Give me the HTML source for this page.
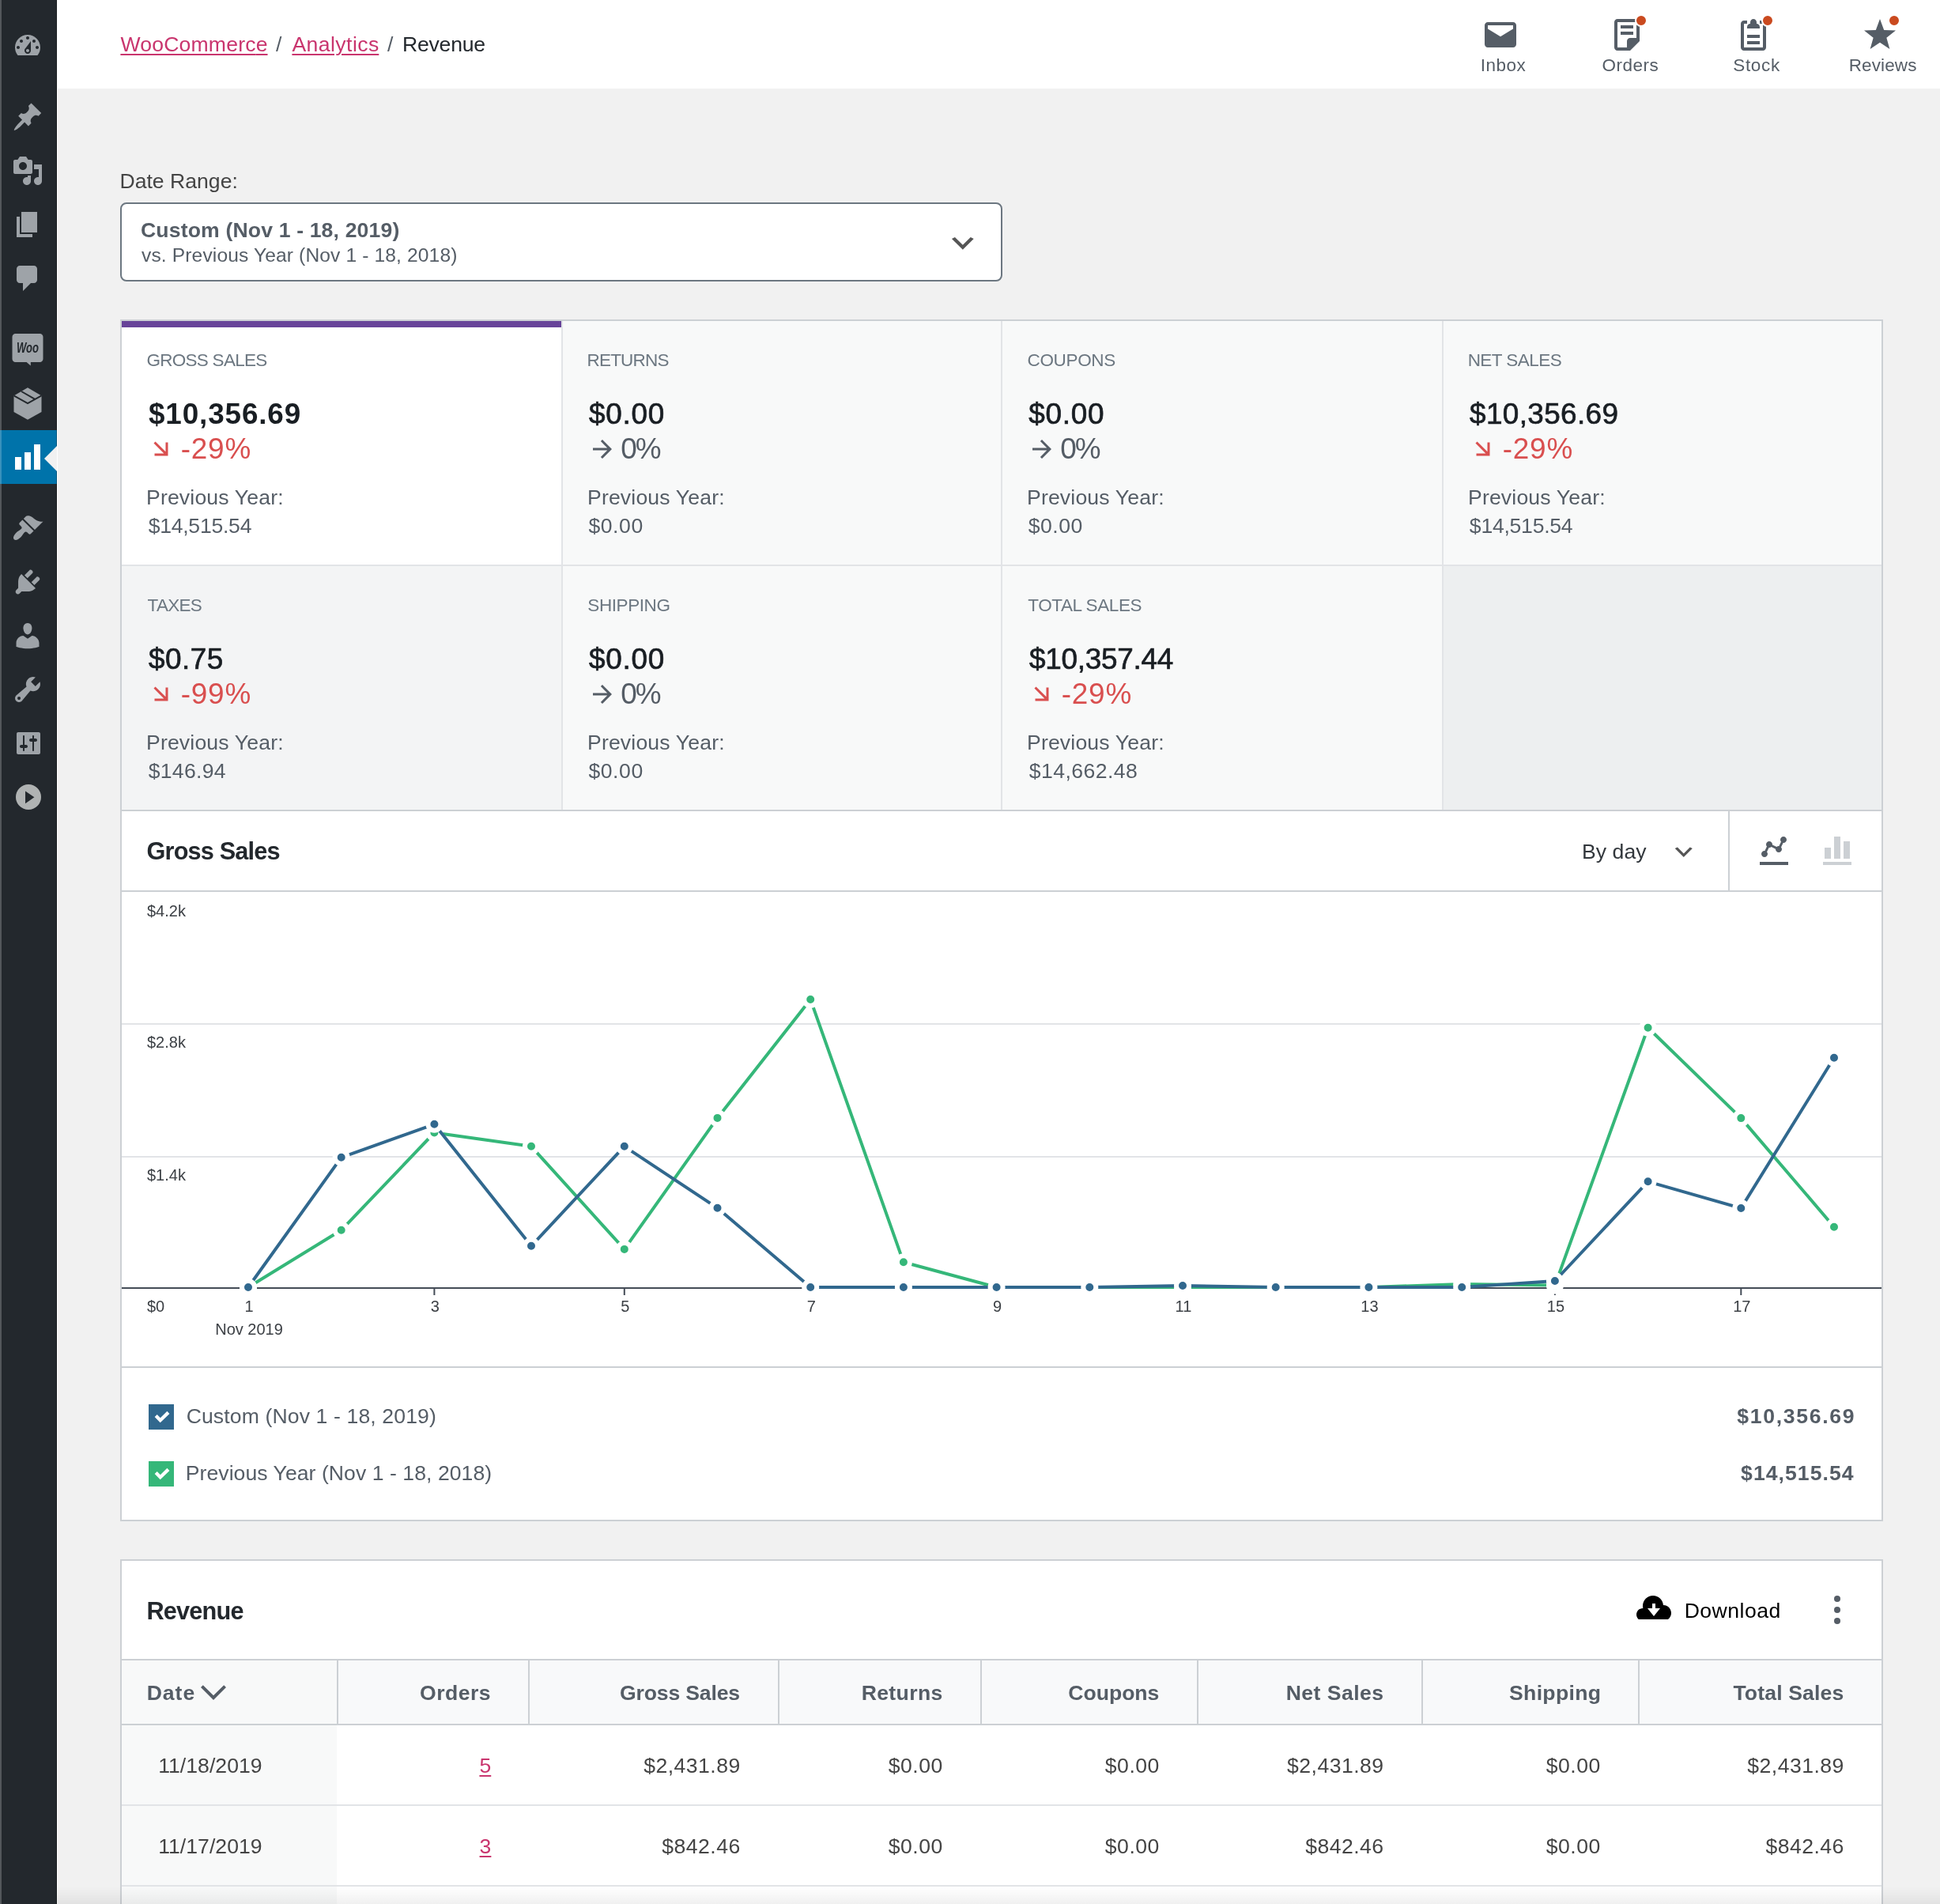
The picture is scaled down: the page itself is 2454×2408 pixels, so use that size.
<!DOCTYPE html>
<html lang="en"><head><meta charset="utf-8"><title>Revenue &lsaquo; Analytics &lsaquo; WooCommerce</title><style>
html,body{margin:0;padding:0}
body{width:2454px;height:2408px;background:#f1f1f1;font-family:"Liberation Sans",Arial,sans-serif;position:relative;-webkit-font-smoothing:antialiased}
nav,header,section,ul,h1,h2{position:absolute;left:0;top:0;margin:0;padding:0;list-style:none;font-weight:inherit;font-size:inherit}
.t{position:absolute;white-space:nowrap;line-height:1;margin:0;padding:0;text-decoration:none}
a.lnk{text-decoration:underline;text-decoration-thickness:2px;text-underline-offset:3px}
.card{position:absolute}
li{list-style:none;margin:0;padding:0}
.dot{position:absolute;width:12px;height:12px;border-radius:50%;background:#ca4a1f;border:2px solid #fff}
svg{display:block;overflow:visible}
#wpwrap{position:absolute;left:0;top:0;width:2454px;height:2408px;overflow:hidden;will-change:transform}
</style></head>
<body>
<div id="wpwrap">
<nav id="adminmenu" aria-label="Main menu"><div style="position:absolute;left:0px;top:0px;width:72px;height:2408px;background:#23282d;"></div><div style="position:absolute;left:0px;top:544px;width:72px;height:68px;background:#0073aa;"></div><div style="position:absolute;left:71px;top:0px;width:1px;height:2408px;background:rgba(0,0,0,.25);"></div><svg style="position:absolute;left:56px;top:564px;" width="16" height="32" viewBox="0 0 16 32"><path fill="#f1f1f1" d="M16 0L0 16l16 16z"/></svg><div style="position:absolute;left:0px;top:0px;width:2px;height:2408px;background:rgba(255,255,255,.22);"></div><svg style="position:absolute;left:15px;top:38px;" width="40" height="40" viewBox="0 0 20 20"><title>Dashboard</title><path fill="#9ea3a8" d="M3.76 16h12.48c1.1-1.37 1.76-3.11 1.76-5 0-4.42-3.58-8-8-8s-8 3.58-8 8c0 1.89.66 3.63 1.76 5zM10 4c.55 0 1 .45 1 1s-.45 1-1 1-1-.45-1-1 .45-1 1-1zM6 6c.55 0 1 .45 1 1s-.45 1-1 1-1-.45-1-1 .45-1 1-1zm8 0c.55 0 1 .45 1 1s-.45 1-1 1-1-.45-1-1 .45-1 1-1zm-5.37 5.55L12 7v6c0 1.1-.9 2-2 2s-2-.9-2-2c0-.57.24-1.08.63-1.45zM4 10c.55 0 1 .45 1 1s-.45 1-1 1-1-.45-1-1 .45-1 1-1zm12 0c.55 0 1 .45 1 1s-.45 1-1 1-1-.45-1-1 .45-1 1-1zm-5 3c0-.55-.45-1-1-1s-1 .45-1 1 .45 1 1 1 1-.45 1-1z"/></svg><svg style="position:absolute;left:15px;top:128px;" width="40" height="40" viewBox="0 0 20 20"><title>Posts</title><path fill="#9ea3a8" d="M10.44 3.02l1.82-1.82 6.36 6.35-1.83 1.82c-1.05-.68-2.48-.57-3.41.36l-.75.75c-.92.93-1.04 2.35-.35 3.41l-1.83 1.82-2.41-2.41-2.8 2.79c-.42.42-3.38 2.71-3.8 2.29s1.86-3.39 2.28-3.81l2.79-2.79L4.1 9.36l1.83-1.82c1.05.69 2.48.57 3.4-.36l.75-.75c.93-.92 1.05-2.35.36-3.41z"/></svg><svg style="position:absolute;left:15px;top:196px;" width="40" height="40" viewBox="0 0 20 20"><title>Media</title><path fill="#9ea3a8" d="M13 11V4c0-.55-.45-1-1-1h-1.67L9 1H5L3.67 3H2c-.55 0-1 .45-1 1v7c0 .55.45 1 1 1h10c.55 0 1-.45 1-1zM7 4.5c1.38 0 2.5 1.12 2.5 2.5S8.38 9.5 7 9.5 4.5 8.38 4.5 7 5.62 4.5 7 4.5zM14 6h5v10.5c0 1.38-1.12 2.5-2.5 2.5S14 17.880 14 16.5s1.12-2.5 2.5-2.5c.17 0 .34.02.5.05V9h-3V6zm-4 8.05V13h2v3.5c0 1.38-1.12 2.5-2.5 2.5S7 17.880 7 16.5 8.120 14 9.5 14c.17 0 .34.02.5.05z"/></svg><svg style="position:absolute;left:15px;top:264px;" width="40" height="40" viewBox="0 0 20 20"><title>Pages</title><path fill="#9ea3a8" d="M6 15V2h10v13H6zm-1 1h8v2H3V5h2v11z"/></svg><svg style="position:absolute;left:15px;top:332px;" width="40" height="40" viewBox="0 0 20 20"><title>Comments</title><path fill="#9ea3a8" d="M5 2h9c1.1 0 2 .9 2 2v7c0 1.1-.9 2-2 2h-2l-5 5v-5H5c-1.1 0-2-.9-2-2V4c0-1.1.9-2 2-2z"/></svg><svg style="position:absolute;left:15px;top:420px;" width="40" height="44" viewBox="15 420 40 44"><title>WooCommerce</title><path fill="#9ea3a8" d="M19.500 422h31c2.200 0 4 1.800 4 4v28c0 2.200-1.800 4-4 4H38.800v4.600L33.600 458H19.500c-2.200 0-4-1.800-4-4v-28c0-2.200 1.800-4 4-4z"/><text x="21" y="446.200" textLength="28" lengthAdjust="spacingAndGlyphs" font-family='"Liberation Sans", sans-serif' font-size="17.500" font-weight="700" font-style="italic" fill="#23282d">Woo</text></svg><svg style="position:absolute;left:15px;top:488px;" width="40" height="44" viewBox="15 488 40 44"><title>Products</title><path fill="#9ea3a8" d="M35 490.300L52.500 500.400V521L35 530.700 17.500 521v-20.600z"/><path fill="none" stroke="#23282d" stroke-width="2" d="M17.500 500.400L35 510.100l17.500-9.700M27 495l16.800 9.700"/></svg><svg style="position:absolute;left:15px;top:558px;" width="40" height="40" viewBox="0 0 20 20"><title>Analytics</title><path fill="#fff" d="M18 18V2h-4v16h4zm-6 0V7H8v11h4zm-6 0v-8H2v8h4z"/></svg><svg style="position:absolute;left:15px;top:648px;" width="40" height="40" viewBox="0 0 20 20"><title>Appearance</title><path fill="#9ea3a8" d="M14.48 11.06L7.41 3.99l1.5-1.5c.5-.56 2.3-.47 3.51.32 1.21.8 1.43 1.28 2.91 2.1 1.18.64 2.45 1.26 4.45.85zm-.71.71L6.7 4.7 4.93 6.47c-.39.39-.39 1.02 0 1.41l1.06 1.06c.39.39.39 1.03 0 1.42-.6.6-1.43 1.11-2.21 1.69-.35.26-.7.53-1.01.84C1.43 14.23.4 16.08 1.4 17.070c.99 1 2.84-.03 4.18-1.36.31-.31.58-.66.85-1.02.57-.78 1.08-1.61 1.69-2.21.39-.39 1.02-.39 1.41 0l1.060 1.060c.39.39 1.020.39 1.410 0z"/></svg><svg style="position:absolute;left:15px;top:716px;" width="40" height="40" viewBox="0 0 20 20"><title>Plugins</title><path fill="#9ea3a8" d="M13.11 4.36L9.87 7.6 8 5.73l3.24-3.24c.35-.34 1.05-.2 1.56.32.52.51.66 1.21.31 1.55zm-8 1.77l.91-1.12 9.01 9.01-1.19.84c-.71.71-2.63 1.16-3.82 1.160H6.140L4.9 17.260c-.59.59-1.54.59-2.12 0-.59-.58-.59-1.53 0-2.12l1.240-1.240v-3.880c0-1.130.4-3.190 1.090-3.890zm7.260 3.970l3.240-3.240c.34-.35 1.040-.21 1.550.31.52.51.66 1.210.31 1.550l-3.240 3.250z"/></svg><svg style="position:absolute;left:15px;top:784px;" width="40" height="40" viewBox="0 0 20 20"><title>Users</title><path fill="#9ea3a8" d="M10 9.25c-2.27 0-2.73-3.44-2.73-3.44C7 4.02 7.82 2 9.97 2c2.16 0 2.980 2.020 2.710 3.810 0 0-.41 3.440-2.680 3.440zm0 2.570L12.720 10c2.390 0 4.520 2.330 4.520 4.530v2.490s-3.650 1.130-7.240 1.130c-3.650 0-7.240-1.130-7.240-1.130v-2.490c0-2.250 1.940-4.480 4.470-4.480z"/></svg><svg style="position:absolute;left:15px;top:852px;" width="40" height="40" viewBox="0 0 20 20"><title>Tools</title><path fill="#9ea3a8" d="M16.68 9.77c-1.34 1.34-3.3 1.67-4.95.99l-5.41 6.520c-.99.99-2.590.99-3.580 0s-.99-2.590 0-3.570l6.520-5.420c-.68-1.650-.35-3.610.99-4.950 1.280-1.280 3.120-1.620 4.720-1.060l-2.890 2.890 2.820 2.820 2.860-2.870c.53 1.580.18 3.390-1.080 4.650zM3.810 16.210c.4.39 1.040.39 1.430 0 .4-.4.4-1.040 0-1.430-.39-.4-1.030-.4-1.430 0-.39.39-.39 1.030 0 1.430z"/></svg><svg style="position:absolute;left:15px;top:920px;" width="40" height="40" viewBox="0 0 20 20"><title>Settings</title><path fill="#9ea3a8" d="M18 16V4c0-.55-.45-1-1-1H4c-.55 0-1 .45-1 1v12c0 .55.45 1 1 1h13c.55 0 1-.45 1-1zM8 11h1c.55 0 1 .45 1 1s-.45 1-1 1H8v1.500c0 .28-.22.5-.5.5s-.5-.22-.5-.5V13H6c-.55 0-1-.45-1-1s.45-1 1-1h1V5.500c0-.28.22-.5.5-.5s.5.22.5.5V11zm5-2h-1c-.55 0-1-.45-1-1s.45-1 1-1h1V5.500c0-.28.22-.5.5-.5s.5.22.5.5V7h1c.55 0 1 .45 1 1s-.45 1-1 1h-1v5.500c0 .28-.22.5-.5.5s-.5-.22-.5-.5V9z"/></svg><svg style="position:absolute;left:16px;top:988px;" width="40" height="40" viewBox="16 988 40 40"><title>Collapse menu</title><path fill="#b0b3b3" fill-rule="evenodd" d="M36 992a16 16 0 100 32 16 16 0 000-32zM32 1000.400l11.400 7.900-11.400 7.900z"/></svg></nav>
<header id="wc-header"><div style="position:absolute;left:72px;top:0px;width:2382px;height:112px;background:#fff;"></div><div style="position:absolute;left:72px;top:112px;width:1px;height:2296px;background:#fff;"></div><h1 class="crumbs"><a class="t lnk" href="#" style="left:152.40px;top:43.38px;font-size:26.6px;color:#c9356e;letter-spacing:0.189px;">WooCommerc<span style="letter-spacing:0">e</span></a><span class="t" style="left:349.10px;top:43.38px;font-size:26.6px;color:#555d66;">/</span><a class="t lnk" href="#" style="left:369.40px;top:43.38px;font-size:26.6px;color:#c9356e;letter-spacing:0.436px;">Analytic<span style="letter-spacing:0">s</span></a><span class="t" style="left:490.00px;top:43.38px;font-size:26.6px;color:#555d66;">/</span><span class="t" style="left:508.98px;top:43.38px;font-size:26.6px;color:#23282d;letter-spacing:-0.230px;">Revenue</span></h1><div class="tab"><svg style="position:absolute;left:1874px;top:20px;" width="48" height="48" viewBox="0 0 24 24"><path fill="#555d66" d="M20 4H4c-1.105 0-2 .895-2 2v12c0 1.105.895 2 2 2h16c1.105 0 2-.895 2-2V6c0-1.105-.895-2-2-2zm0 4.236l-8 4.882-8-4.882V6h16v2.236z"/></svg><span class="t" style="left:1872.70px;top:71.65px;font-size:22.5px;color:#555d66;letter-spacing:0.496px;">Inbox</span></div><div class="tab"><svg style="position:absolute;left:2034px;top:20px;" width="48" height="48" viewBox="0 0 24 24"><path fill="#555d66" d="M16 8H8V6h8v2zm0 2H8v2h8v-2zm4-6v12l-6 6H6c-1.105 0-2-.895-2-2V4c0-1.105.895-2 2-2h12c1.105 0 2 .895 2 2zm-2 10V4H6v16h6v-4c0-1.105.895-2 2-2h4z"/></svg><span class="dot" style="left:2068px;top:18px"></span><span class="t" style="left:2026.40px;top:71.65px;font-size:22.5px;color:#555d66;letter-spacing:0.517px;">Orders</span></div><div class="tab"><svg style="position:absolute;left:2194px;top:20px;" width="48" height="48" viewBox="0 0 24 24"><path fill="#555d66" d="M16 18H8v-2h8v2zm0-6H8v2h8v-2zm2-9h-2v2h2v15H6V5h2V3H6c-1.105 0-2 .895-2 2v15c0 1.105.895 2 2 2h12c1.105 0 2-.895 2-2V5c0-1.105-.895-2-2-2zm-4 2V4c0-1.105-.895-2-2-2s-2 .895-2 2v1c-1.105 0-2 .895-2 2v1h8V7c0-1.105-.895-2-2-2z"/></svg><span class="dot" style="left:2228px;top:18px"></span><span class="t" style="left:2192.30px;top:71.65px;font-size:22.5px;color:#555d66;letter-spacing:0.651px;">Stock</span></div><div class="tab"><svg style="position:absolute;left:2354px;top:20px;" width="48" height="48" viewBox="0 0 24 24"><path fill="#555d66" d="M12 2l2.582 6.953L22 9.257l-5.822 4.602L18.180 21 12 16.890 5.820 21l2.002-7.140L2 9.256l7.418-.304"/></svg><span class="dot" style="left:2388px;top:18px"></span><span class="t" style="left:2338.75px;top:71.65px;font-size:22.5px;color:#555d66;letter-spacing:0.113px;">Reviews</span></div></header>
<section id="filters"><label class="t" style="left:151.47px;top:215.98px;font-size:26.6px;color:#444;letter-spacing:0.007px;">Date Range:</label><div style="position:absolute;left:152px;top:256px;width:1112px;height:96px;background:#fff;border:2px solid #6c7781;border-radius:8px;"></div><span class="t" style="left:178.00px;top:277.78px;font-size:26.6px;font-weight:700;color:#555d66;letter-spacing:0.150px;">Custom (Nov 1 - 18, 2019)</span><span class="t" style="left:179.00px;top:311.48px;font-size:24.6px;color:#555d66;letter-spacing:0.124px;">vs. Previous Year (Nov 1 - 18, 2018)</span><svg style="position:absolute;left:1198.2px;top:287.9px;" width="39.7" height="39.7" viewBox="0 0 20 20"><path fill="#555" d="M5 6l5 5 5-5 2 1-7 7-7-7z"/></svg></section>
<ul id="summary"><li><div style="position:absolute;left:152px;top:404px;width:2230px;height:622px;background:#ccd0d4;"></div><div style="position:absolute;left:154px;top:406px;width:2226px;height:618px;background:#e2e4e7;"></div></li><li><div class="card" style="left:154px;top:406px;width:556px;height:308px;background:#fff"></div><div style="position:absolute;left:154px;top:406px;width:556px;height:8px;background:#674399;"></div><span class="t lab" style="left:185.57px;top:445.45px;font-size:22.5px;color:#6c7781;letter-spacing:-0.743px;">GROSS SALES</span><span class="t" style="left:187.90px;top:505.66px;font-size:36.9px;font-weight:700;color:#191e23;letter-spacing:0.860px;">$10,356.69</span><svg style="position:absolute;left:185.8px;top:550px;" width="36" height="36" viewBox="0 0 24 24"><path fill="#d94f4f" transform="rotate(45 12 12)" d="M12 4l-1.410 1.410L16.170 11H4v2h12.170l-5.580 5.590L12 20l8-8-8-8z"/></svg><span class="t" style="left:228.75px;top:549.56px;font-size:36.9px;color:#d94f4f;letter-spacing:0.770px;">-29%</span><span class="t" style="left:184.97px;top:616.18px;font-size:26.6px;color:#555d66;letter-spacing:0.169px;">Previous Year:</span><span class="t" style="left:187.65px;top:652.28px;font-size:26.6px;color:#555d66;letter-spacing:-0.257px;">$14,515.54</span></li><li><div class="card" style="left:712px;top:406px;width:554px;height:308px;background:#f8f9f9"></div><span class="t lab" style="left:742.55px;top:445.45px;font-size:22.5px;color:#6c7781;letter-spacing:-0.816px;">RETURNS</span><span class="t" style="left:745.10px;top:505.66px;font-size:36.9px;-webkit-text-stroke:.7px currentColor;color:#191e23;letter-spacing:0.745px;">$0.00</span><svg style="position:absolute;left:743.8px;top:550px;" width="36" height="36" viewBox="0 0 24 24"><path fill="#555d66" d="M12 4l-1.410 1.410L16.170 11H4v2h12.170l-5.580 5.590L12 20l8-8-8-8z"/></svg><span class="t" style="left:785.35px;top:549.56px;font-size:36.9px;color:#555d66;letter-spacing:-2.180px;">0%</span><span class="t" style="left:742.98px;top:616.18px;font-size:26.6px;color:#555d66;letter-spacing:0.169px;">Previous Year:</span><span class="t" style="left:744.45px;top:652.28px;font-size:26.6px;color:#555d66;letter-spacing:0.551px;">$0.00</span></li><li><div class="card" style="left:1268px;top:406px;width:556px;height:308px;background:#f8f9f9"></div><span class="t lab" style="left:1299.58px;top:445.45px;font-size:22.5px;color:#6c7781;letter-spacing:-0.355px;">COUPONS</span><span class="t" style="left:1301.30px;top:505.66px;font-size:36.9px;-webkit-text-stroke:.7px currentColor;color:#191e23;letter-spacing:0.745px;">$0.00</span><svg style="position:absolute;left:1299.8px;top:550px;" width="36" height="36" viewBox="0 0 24 24"><path fill="#555d66" d="M12 4l-1.410 1.410L16.170 11H4v2h12.170l-5.580 5.590L12 20l8-8-8-8z"/></svg><span class="t" style="left:1341.35px;top:549.56px;font-size:36.9px;color:#555d66;letter-spacing:-2.180px;">0%</span><span class="t" style="left:1298.97px;top:616.18px;font-size:26.6px;color:#555d66;letter-spacing:0.169px;">Previous Year:</span><span class="t" style="left:1300.65px;top:652.28px;font-size:26.6px;color:#555d66;letter-spacing:0.551px;">$0.00</span></li><li><div class="card" style="left:1826px;top:406px;width:554px;height:308px;background:#f8f9f9"></div><span class="t lab" style="left:1856.65px;top:445.45px;font-size:22.5px;color:#6c7781;letter-spacing:-0.542px;">NET SALES</span><span class="t" style="left:1859.10px;top:505.66px;font-size:36.9px;-webkit-text-stroke:.7px currentColor;color:#191e23;letter-spacing:0.357px;">$10,356.69</span><svg style="position:absolute;left:1857.8px;top:550px;" width="36" height="36" viewBox="0 0 24 24"><path fill="#d94f4f" transform="rotate(45 12 12)" d="M12 4l-1.410 1.410L16.170 11H4v2h12.170l-5.580 5.590L12 20l8-8-8-8z"/></svg><span class="t" style="left:1900.75px;top:549.56px;font-size:36.9px;color:#d94f4f;letter-spacing:0.770px;">-29%</span><span class="t" style="left:1856.97px;top:616.18px;font-size:26.6px;color:#555d66;letter-spacing:0.169px;">Previous Year:</span><span class="t" style="left:1858.85px;top:652.28px;font-size:26.6px;color:#555d66;letter-spacing:-0.257px;">$14,515.54</span></li><li><div class="card" style="left:154px;top:716px;width:556px;height:308px;background:#f3f4f5"></div><span class="t lab" style="left:186.60px;top:755.45px;font-size:22.5px;color:#6c7781;letter-spacing:-0.749px;">TAXES</span><span class="t" style="left:187.90px;top:815.66px;font-size:36.9px;-webkit-text-stroke:.7px currentColor;color:#191e23;letter-spacing:0.489px;">$0.75</span><svg style="position:absolute;left:185.8px;top:860px;" width="36" height="36" viewBox="0 0 24 24"><path fill="#d94f4f" transform="rotate(45 12 12)" d="M12 4l-1.410 1.410L16.170 11H4v2h12.170l-5.580 5.590L12 20l8-8-8-8z"/></svg><span class="t" style="left:228.75px;top:859.56px;font-size:36.9px;color:#d94f4f;letter-spacing:0.770px;">-99%</span><span class="t" style="left:184.97px;top:926.18px;font-size:26.6px;color:#555d66;letter-spacing:0.169px;">Previous Year:</span><span class="t" style="left:187.65px;top:962.28px;font-size:26.6px;color:#555d66;letter-spacing:0.311px;">$146.94</span></li><li><div class="card" style="left:712px;top:716px;width:554px;height:308px;background:#f8f9f9"></div><span class="t lab" style="left:743.30px;top:755.45px;font-size:22.5px;color:#6c7781;letter-spacing:-0.414px;">SHIPPING</span><span class="t" style="left:745.10px;top:815.66px;font-size:36.9px;-webkit-text-stroke:.7px currentColor;color:#191e23;letter-spacing:0.745px;">$0.00</span><svg style="position:absolute;left:743.8px;top:860px;" width="36" height="36" viewBox="0 0 24 24"><path fill="#555d66" d="M12 4l-1.410 1.410L16.170 11H4v2h12.170l-5.580 5.590L12 20l8-8-8-8z"/></svg><span class="t" style="left:785.35px;top:859.56px;font-size:36.9px;color:#555d66;letter-spacing:-2.180px;">0%</span><span class="t" style="left:742.98px;top:926.18px;font-size:26.6px;color:#555d66;letter-spacing:0.169px;">Previous Year:</span><span class="t" style="left:744.45px;top:962.28px;font-size:26.6px;color:#555d66;letter-spacing:0.551px;">$0.00</span></li><li><div class="card" style="left:1268px;top:716px;width:556px;height:308px;background:#f8f9f9"></div><span class="t lab" style="left:1300.30px;top:755.45px;font-size:22.5px;color:#6c7781;letter-spacing:-0.422px;">TOTAL SALES</span><span class="t" style="left:1302.10px;top:815.66px;font-size:36.9px;-webkit-text-stroke:.7px currentColor;color:#191e23;letter-spacing:-0.285px;">$10,357.44</span><svg style="position:absolute;left:1299.8px;top:860px;" width="36" height="36" viewBox="0 0 24 24"><path fill="#d94f4f" transform="rotate(45 12 12)" d="M12 4l-1.410 1.410L16.170 11H4v2h12.170l-5.580 5.590L12 20l8-8-8-8z"/></svg><span class="t" style="left:1342.75px;top:859.56px;font-size:36.9px;color:#d94f4f;letter-spacing:0.770px;">-29%</span><span class="t" style="left:1298.97px;top:926.18px;font-size:26.6px;color:#555d66;letter-spacing:0.169px;">Previous Year:</span><span class="t" style="left:1301.75px;top:962.28px;font-size:26.6px;color:#555d66;letter-spacing:0.429px;">$14,662.48</span></li><li><div class="card" style="left:1826px;top:716px;width:554px;height:308px;background:#edeff0"></div></li></ul>
<section id="chart"><div style="position:absolute;left:152px;top:1026px;width:2230px;height:898px;background:#ccd0d4;"></div><div style="position:absolute;left:154px;top:1026px;width:2226px;height:100px;background:#fff;"></div><div style="position:absolute;left:154px;top:1128px;width:2226px;height:600px;background:#fff;"></div><div style="position:absolute;left:154px;top:1730px;width:2226px;height:192px;background:#fff;"></div><h2 class="t" style="left:185.55px;top:1061.81px;font-size:30.7px;font-weight:700;color:#23282d;letter-spacing:-0.843px;">Gross Sales</h2><span class="t" style="left:2000.97px;top:1063.88px;font-size:26.6px;color:#32373c;letter-spacing:0.051px;">By day</span><svg style="position:absolute;left:2114.2px;top:1062.4px;" width="31.6" height="31.6" viewBox="0 0 20 20"><path fill="#555" d="M5 6l5 5 5-5 2 1-7 7-7-7z"/></svg><div style="position:absolute;left:2186px;top:1026px;width:2px;height:100px;background:#ccd0d4;"></div><svg style="position:absolute;left:2220px;top:1052px;" width="48" height="48" viewBox="0 0 24 24"><path fill="#555d66" d="M3 19h18v2H3zm3-3c1.100 0 2-.9 2-2 0-.5-.2-1-.5-1.300L8.800 10H9c.5 0 1-.2 1.300-.5l2.700 1.400v.100c0 1.100.9 2 2 2s2-.9 2-2c0-.5-.2-.9-.5-1.300L17.800 7h.2c1.100 0 2-.9 2-2s-.9-2-2-2-2 .9-2 2c0 .5.2 1 .5 1.300L15.200 9H15c-.5 0-1 .2-1.300.5L11 8.200V8c0-1.100-.9-2-2-2s-2 .9-2 2c0 .5.2 1 .5 1.300L6.200 12H6c-1.100 0-2 .9-2 2s.9 2 2 2z"/></svg><svg style="position:absolute;left:2300px;top:1052px;" width="48" height="48" viewBox="0 0 24 24"><path fill="#ccd0d4" d="M21 21H3v-2h18v2zM8 10H4v7h4v-7zm6-7h-4v14h4V3zm6 3h-4v11h4V6z"/></svg><svg style="position:absolute;left:154px;top:1128px;font-family:'Liberation Sans',Helvetica,Arial,sans-serif;" width="2226" height="600" viewBox="154 1128 2226 600"><g class="grid" stroke="#e2e4e7" stroke-width="2"><line x1="154" x2="2380" y1="1295" y2="1295"/><line x1="154" x2="2380" y1="1463" y2="1463"/></g><line x1="154" x2="2380" y1="1629" y2="1629" stroke="#444c57" stroke-width="2"/><g stroke="#444c57" stroke-width="2"><line x1="549.4" x2="549.4" y1="1629" y2="1638"/><line x1="789.8" x2="789.8" y1="1629" y2="1638"/><line x1="1025.2" x2="1025.2" y1="1629" y2="1638"/><line x1="1260.6" x2="1260.6" y1="1629" y2="1638"/><line x1="1496.0" x2="1496.0" y1="1629" y2="1638"/><line x1="1731.4" x2="1731.4" y1="1629" y2="1638"/><line x1="1966.9" x2="1966.9" y1="1629" y2="1638"/><line x1="2202.3" x2="2202.3" y1="1629" y2="1638"/></g><g class="yaxis" font-size="20" fill="#3c4045"><text x="186" y="1159.2">$4.2k</text><text x="186" y="1324.9">$2.8k</text><text x="186" y="1493">$1.4k</text><text x="186" y="1658.9">$0</text></g><g class="xaxis" font-size="20" fill="#3c4045" text-anchor="middle"><text x="315.0" y="1659">1</text><text x="550.4" y="1659">3</text><text x="790.8" y="1659">5</text><text x="1026.2" y="1659">7</text><text x="1261.6" y="1659">9</text><text x="1497.0" y="1659">11</text><text x="1732.4" y="1659">13</text><text x="1967.9" y="1659">15</text><text x="2203.3" y="1659">17</text><text x="315.0" y="1687.7">Nov 2019</text></g><g fill="#35b779" stroke="#fff" stroke-width="6"><polyline fill="none" stroke="#35b779" stroke-width="4" stroke-linejoin="round" points="314.0,1628.0 431.7,1555.8 549.4,1432.5 672.0,1449.8 789.8,1579.9 907.5,1413.9 1025.2,1264.0 1142.9,1596.3 1260.6,1628.0 1378.3,1628.0 1496.0,1628.0 1613.7,1628.0 1731.4,1628.0 1849.2,1624.0 1966.9,1625.6 2084.6,1299.8 2202.3,1414.1 2320.0,1551.7"/><circle cx="314.0" cy="1628.0" r="8"/><circle cx="431.7" cy="1555.8" r="8"/><circle cx="549.4" cy="1432.5" r="8"/><circle cx="672.0" cy="1449.8" r="8"/><circle cx="789.8" cy="1579.9" r="8"/><circle cx="907.5" cy="1413.9" r="8"/><circle cx="1025.2" cy="1264.0" r="8"/><circle cx="1142.9" cy="1596.3" r="8"/><circle cx="1260.6" cy="1628.0" r="8"/><circle cx="1378.3" cy="1628.0" r="8"/><circle cx="1496.0" cy="1628.0" r="8"/><circle cx="1613.7" cy="1628.0" r="8"/><circle cx="1731.4" cy="1628.0" r="8"/><circle cx="1849.2" cy="1624.0" r="8"/><circle cx="1966.9" cy="1625.6" r="8"/><circle cx="2084.6" cy="1299.8" r="8"/><circle cx="2202.3" cy="1414.1" r="8"/><circle cx="2320.0" cy="1551.7" r="8"/></g><g fill="#31688e" stroke="#fff" stroke-width="6"><polyline fill="none" stroke="#31688e" stroke-width="4" stroke-linejoin="round" points="314.0,1628.0 431.7,1463.8 549.4,1421.8 672.0,1575.8 789.8,1449.8 907.5,1527.8 1025.2,1628.0 1142.9,1628.0 1260.6,1628.0 1378.3,1628.0 1496.0,1626.0 1613.7,1628.0 1731.4,1628.0 1849.2,1628.0 1966.9,1620.0 2084.6,1494.3 2202.3,1528.0 2320.0,1337.8"/><circle cx="314.0" cy="1628.0" r="8"/><circle cx="431.7" cy="1463.8" r="8"/><circle cx="549.4" cy="1421.8" r="8"/><circle cx="672.0" cy="1575.8" r="8"/><circle cx="789.8" cy="1449.8" r="8"/><circle cx="907.5" cy="1527.8" r="8"/><circle cx="1025.2" cy="1628.0" r="8"/><circle cx="1142.9" cy="1628.0" r="8"/><circle cx="1260.6" cy="1628.0" r="8"/><circle cx="1378.3" cy="1628.0" r="8"/><circle cx="1496.0" cy="1626.0" r="8"/><circle cx="1613.7" cy="1628.0" r="8"/><circle cx="1731.4" cy="1628.0" r="8"/><circle cx="1849.2" cy="1628.0" r="8"/><circle cx="1966.9" cy="1620.0" r="8"/><circle cx="2084.6" cy="1494.3" r="8"/><circle cx="2202.3" cy="1528.0" r="8"/><circle cx="2320.0" cy="1337.8" r="8"/></g></svg><div style="position:absolute;left:188px;top:1776px;width:32px;height:32px;background:#31688e;"></div><svg style="position:absolute;left:188px;top:1776px;" width="32" height="32" viewBox="188 1776 32 32"><path fill="none" stroke="#fff" stroke-width="4.300" d="M197.200 1790.500l5.550 5.700 10.150-9.850"/></svg><div style="position:absolute;left:188px;top:1848px;width:32px;height:32px;background:#35b779;"></div><svg style="position:absolute;left:188px;top:1848px;" width="32" height="32" viewBox="188 1848 32 32"><path fill="none" stroke="#fff" stroke-width="4.300" d="M197.200 1862.500l5.550 5.700 10.150-9.850"/></svg><span class="t" style="left:235.65px;top:1778.28px;font-size:26.6px;color:#555d66;letter-spacing:0.118px;">Custom (Nov 1 - 18, 2019)</span><span class="t" style="left:234.78px;top:1850.48px;font-size:26.6px;color:#555d66;letter-spacing:0.050px;">Previous Year (Nov 1 - 18, 2018)</span><span class="t" style="left:2197.35px;top:1778.38px;font-size:26.6px;font-weight:700;color:#555d66;letter-spacing:1.671px;">$10,356.69</span><span class="t" style="left:2202.05px;top:1850.08px;font-size:26.6px;font-weight:700;color:#555d66;letter-spacing:1.052px;">$14,515.54</span></section>
<section id="revenue-table"><div style="position:absolute;left:152px;top:1972px;width:2230px;height:440px;background:#ccd0d4;"></div><div style="position:absolute;left:154px;top:1974px;width:2226px;height:440px;background:#fff;"></div><h2 class="t" style="left:185.40px;top:2022.51px;font-size:30.7px;font-weight:700;color:#23282d;letter-spacing:-0.787px;">Revenue</h2><svg style="position:absolute;left:2068px;top:2012px;" width="48" height="48" viewBox="0 0 24 24"><path fill="#000" d="M18 9c-.009 0-.017.002-.025.003C17.720 5.646 14.922 3 11.500 3 7.910 3 5 5.910 5 9.500c0 .524.069 1.031.186 1.519C5.123 11.016 5.064 11 5 11c-2.209 0-4 1.791-4 4 0 1.202.541 2.267 1.380 3h18.593C22.196 17.089 23 15.643 23 14c0-2.761-2.239-5-5-5zm-6 7l-4-5h3V8h2v3h3l-4 5z"/></svg><span class="t" style="left:2130.68px;top:2023.78px;font-size:26.6px;color:#000;letter-spacing:0.471px;">Download</span><svg style="position:absolute;left:2316px;top:2014px;" width="16" height="44" viewBox="2316 2014 16 44"><g fill="#555d66"><circle cx="2324" cy="2022" r="4"/><circle cx="2324" cy="2036" r="4"/><circle cx="2324" cy="2050" r="4"/></g></svg><div style="position:absolute;left:154px;top:2098px;width:2226px;height:84px;background:#ccd0d4;"></div><div style="position:absolute;left:154px;top:2100px;width:272px;height:80px;background:#f8f9f9;"></div><span class="t" style="left:185.65px;top:2127.78px;font-size:26.6px;font-weight:700;color:#555d66;letter-spacing:0.963px;">Date</span><div style="position:absolute;left:428px;top:2100px;width:240px;height:80px;background:#f8f9fa;"></div><span class="t" style="left:531.10px;top:2127.78px;font-size:26.6px;font-weight:700;color:#555d66;letter-spacing:0.463px;">Orders</span><div style="position:absolute;left:670px;top:2100px;width:314px;height:80px;background:#f8f9fa;"></div><span class="t" style="left:784.00px;top:2127.78px;font-size:26.6px;font-weight:700;color:#555d66;letter-spacing:-0.164px;">Gross Sales</span><div style="position:absolute;left:986px;top:2100px;width:254px;height:80px;background:#f8f9fa;"></div><span class="t" style="left:1089.65px;top:2127.78px;font-size:26.6px;font-weight:700;color:#555d66;letter-spacing:0.365px;">Returns</span><div style="position:absolute;left:1242px;top:2100px;width:272px;height:80px;background:#f8f9fa;"></div><span class="t" style="left:1351.20px;top:2127.78px;font-size:26.6px;font-weight:700;color:#555d66;">Coupons</span><div style="position:absolute;left:1516px;top:2100px;width:282px;height:80px;background:#f8f9fa;"></div><span class="t" style="left:1626.65px;top:2127.78px;font-size:26.6px;font-weight:700;color:#555d66;letter-spacing:0.454px;">Net Sales</span><div style="position:absolute;left:1800px;top:2100px;width:272px;height:80px;background:#f8f9fa;"></div><span class="t" style="left:1909.05px;top:2127.78px;font-size:26.6px;font-weight:700;color:#555d66;letter-spacing:0.319px;">Shipping</span><div style="position:absolute;left:2074px;top:2100px;width:306px;height:80px;background:#f8f9fa;"></div><span class="t" style="left:2192.45px;top:2127.78px;font-size:26.6px;font-weight:700;color:#555d66;letter-spacing:0.133px;">Total Sales</span><svg style="position:absolute;left:246.1px;top:2116.3px;" width="48" height="48" viewBox="0 0 24 24"><path fill="#555d66" d="M20 9l-8 8-8-8 1.414-1.414L12 14.172l6.586-6.586"/></svg><div style="position:absolute;left:154px;top:2182px;width:272px;height:100px;background:#f8f9f9;"></div><div style="position:absolute;left:154px;top:2282px;width:2226px;height:2px;background:#e2e4e7;"></div><span class="t" style="left:200.20px;top:2219.58px;font-size:26.6px;color:#444;letter-spacing:0.035px;">11/18/2019</span><a class="t lnk" href="#" style="left:606.45px;top:2219.58px;font-size:26.6px;color:#c9356e;">5</a><span class="t" style="left:814.15px;top:2219.58px;font-size:26.6px;color:#444;letter-spacing:0.473px;">$2,431.89</span><span class="t" style="left:1123.76px;top:2219.58px;font-size:26.6px;color:#444;letter-spacing:0.473px;">$0.00</span><span class="t" style="left:1397.86px;top:2219.58px;font-size:26.6px;color:#444;letter-spacing:0.473px;">$0.00</span><span class="t" style="left:1628.05px;top:2219.58px;font-size:26.6px;color:#444;letter-spacing:0.473px;">$2,431.89</span><span class="t" style="left:1955.76px;top:2219.58px;font-size:26.6px;color:#444;letter-spacing:0.473px;">$0.00</span><span class="t" style="left:2210.25px;top:2219.58px;font-size:26.6px;color:#444;letter-spacing:0.473px;">$2,431.89</span><div style="position:absolute;left:154px;top:2284px;width:272px;height:100px;background:#f8f9f9;"></div><div style="position:absolute;left:154px;top:2384px;width:2226px;height:2px;background:#e2e4e7;"></div><span class="t" style="left:200.20px;top:2321.58px;font-size:26.6px;color:#444;letter-spacing:0.035px;">11/17/2019</span><a class="t lnk" href="#" style="left:606.58px;top:2321.58px;font-size:26.6px;color:#c9356e;">3</a><span class="t" style="left:837.28px;top:2321.58px;font-size:26.6px;color:#444;letter-spacing:0.473px;">$842.46</span><span class="t" style="left:1123.76px;top:2321.58px;font-size:26.6px;color:#444;letter-spacing:0.473px;">$0.00</span><span class="t" style="left:1397.86px;top:2321.58px;font-size:26.6px;color:#444;letter-spacing:0.473px;">$0.00</span><span class="t" style="left:1651.18px;top:2321.58px;font-size:26.6px;color:#444;letter-spacing:0.473px;">$842.46</span><span class="t" style="left:1955.76px;top:2321.58px;font-size:26.6px;color:#444;letter-spacing:0.473px;">$0.00</span><span class="t" style="left:2233.38px;top:2321.58px;font-size:26.6px;color:#444;letter-spacing:0.473px;">$842.46</span><div style="position:absolute;left:154px;top:2386px;width:272px;height:22px;background:#f8f9f9;"></div><div style="position:absolute;left:72px;top:2386px;width:2382px;height:22px;background:transparent;background:linear-gradient(to bottom,rgba(0,0,0,0),rgba(0,0,0,.06));"></div></section>
</div>
</body></html>
